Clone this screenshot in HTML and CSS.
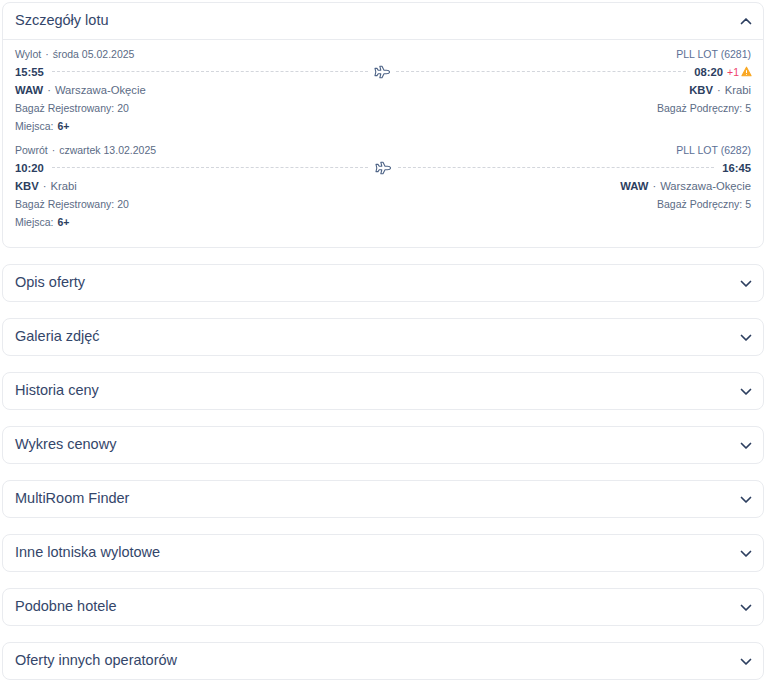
FILE: index.html
```html
<!DOCTYPE html>
<html lang="pl">

<head>
  <meta charset="UTF-8" />
  <meta name="viewport" content="width=device-width, initial-scale=1.0" />
  <title>Szczegóły lotu</title>
  <link rel="stylesheet" href="styles.css">
</head>

<body>
  <svg class="icon-defs" width="0" height="0">
    <symbol id="chevron-down" viewBox="0 0 12 8">
      <path d="M1.5 1.5 6 6l4.5-4.5" fill="none" stroke="currentColor" stroke-width="1.7" stroke-linecap="round" stroke-linejoin="round" />
    </symbol>
    <symbol id="plane" viewBox="0 0 16 14">
      <path d="M15.500 7c0-1-1.500-1.800-3-1.800H10L8 1.200H5.800l1 4H4.200L3 3.400H1L1.800 7 1 10.600h2l1.200-1.800h2.600l-1 4H8l2-4h2.500c1.500 0 3-.8 3-1.800z" fill="none" stroke="currentColor" stroke-width="1.100" stroke-linejoin="round" />
    </symbol>
  </svg>

  <div class="accordion">
    <section class="card">
      <div class="card-head open">
        <span>Szczegóły lotu</span>
        <svg class="chevron flip"><use href="#chevron-down" /></svg>
      </div>
      <div class="card-body">
        <div class="leg">
          <div class="row muted">
            <span>Wylot<i class="dot">·</i>środa 05.02.2025</span>
            <span class="carrier">PLL LOT (6281)</span>
          </div>
          <div class="row times">
            <b>15:55</b>
            <span class="line line-left"></span>
            <svg class="plane"><use href="#plane" /></svg>
            <span class="line"></span>
            <span class="arrival">
              <b>08:20</b>
              <span class="plus">+1</span>
              <svg class="warn" viewBox="0 0 12 11">
                <path d="M6 .8 1 10.200h10z" fill="#f9a825" stroke="#f9a825" stroke-width="1.200" stroke-linejoin="round" />
                <path d="M6 4v3.200M6 8.200v.9" stroke="#fff" stroke-width="1.100" />
              </svg>
            </span>
          </div>
          <div class="row place">
            <span><b>WAW</b><i class="dot">·</i>Warszawa-Okęcie</span>
            <span><b>KBV</b><i class="dot">·</i>Krabi</span>
          </div>
          <div class="row muted">
            <span>Bagaż Rejestrowany: 20</span>
            <span>Bagaż Podręczny: 5</span>
          </div>
          <div class="row muted">
            <span>Miejsca: <b class="seats">6+</b></span>
          </div>
        </div>

        <div class="leg return">
          <div class="row muted">
            <span>Powrót<i class="dot">·</i>czwartek 13.02.2025</span>
            <span class="carrier">PLL LOT (6282)</span>
          </div>
          <div class="row times">
            <b>10:20</b>
            <span class="line line-left"></span>
            <svg class="plane"><use href="#plane" /></svg>
            <span class="line"></span>
            <span class="arrival"><b>16:45</b></span>
          </div>
          <div class="row place">
            <span><b>KBV</b><i class="dot">·</i>Krabi</span>
            <span><b>WAW</b><i class="dot">·</i>Warszawa-Okęcie</span>
          </div>
          <div class="row muted">
            <span>Bagaż Rejestrowany: 20</span>
            <span>Bagaż Podręczny: 5</span>
          </div>
          <div class="row muted">
            <span>Miejsca: <b class="seats">6+</b></span>
          </div>
        </div>
      </div>
    </section>

    <section class="card">
      <div class="card-head"><span>Opis oferty</span><svg class="chevron"><use href="#chevron-down" /></svg></div>
    </section>
    <section class="card">
      <div class="card-head"><span>Galeria zdjęć</span><svg class="chevron"><use href="#chevron-down" /></svg></div>
    </section>
    <section class="card">
      <div class="card-head"><span>Historia ceny</span><svg class="chevron"><use href="#chevron-down" /></svg></div>
    </section>
    <section class="card">
      <div class="card-head"><span>Wykres cenowy</span><svg class="chevron"><use href="#chevron-down" /></svg></div>
    </section>
    <section class="card">
      <div class="card-head"><span>MultiRoom Finder</span><svg class="chevron"><use href="#chevron-down" /></svg></div>
    </section>
    <section class="card">
      <div class="card-head"><span>Inne lotniska wylotowe</span><svg class="chevron"><use href="#chevron-down" /></svg></div>
    </section>
    <section class="card">
      <div class="card-head"><span>Podobne hotele</span><svg class="chevron"><use href="#chevron-down" /></svg></div>
    </section>
    <section class="card">
      <div class="card-head"><span>Oferty innych operatorów</span><svg class="chevron"><use href="#chevron-down" /></svg></div>
    </section>
  </div>
</body>

</html>
```

FILE: styles.css
```css
body {
  margin: 0;
  font-family: "Liberation Sans", Arial, sans-serif;
  background-color: #fff;
  color: #34466a;
  overflow: hidden;
}

.icon-defs {
  display: block;
}

.accordion {
  padding: 2px 4px 0 2px;
  display: flex;
  flex-direction: column;
  gap: 16px;
}

.card {
  border: 1px solid #e9ebef;
  border-radius: 8px;
  background-color: #fff;
}

.card-head {
  height: 34px;
  padding: 0 12px 2px;
  display: flex;
  justify-content: space-between;
  align-items: center;
  font-size: 14.500px;
}

.card-head.open {
  border-bottom: 1px solid #e9ebef;
}

.chevron {
  width: 12px;
  height: 8px;
  margin: 4px -1px 0 0;
  color: #2c3e5f;
}

.chevron.flip {
  margin-top: 2px;
  transform: rotate(180deg);
}

.card-body {
  padding: 4px 12px 17px;
  display: flex;
  flex-direction: column;
  gap: 6px;
}

.row {
  height: 17px;
  padding-top: 1px;
  display: flex;
  justify-content: space-between;
  align-items: center;
  font-size: 10.500px;
  white-space: nowrap;
}

.muted {
  color: #5b6b85;
}

.carrier {
  color: #5b6f95;
}

.dot {
  font-style: normal;
  margin: 0 4px;
}

.times {
  font-size: 11.250px;
}

.line {
  flex: 1;
  border-top: 1px dashed #d3d6dc;
  margin-right: 8px;
}

.line-left {
  flex: 0 0 316px;
  margin: 0 0 0 8px;
}

.plane {
  width: 16px;
  height: 14px;
  color: #4c6285;
  margin: 0 6px;
}

.return .plane {
  margin: 0 7px;
}

.arrival {
  display: flex;
  align-items: center;
  gap: 4px;
}

.plus {
  color: #f0436b;
  font-size: 10.500px;
}

.warn {
  width: 11px;
  height: 11px;
  margin: 0 -1px 0 -2px;
}

.place {
  font-size: 11.250px;
  color: #5b6b85;
}

.place b,
.times b,
.seats {
  color: #2c3e5f;
}

.seats {
  margin-left: 1px;
}
```
